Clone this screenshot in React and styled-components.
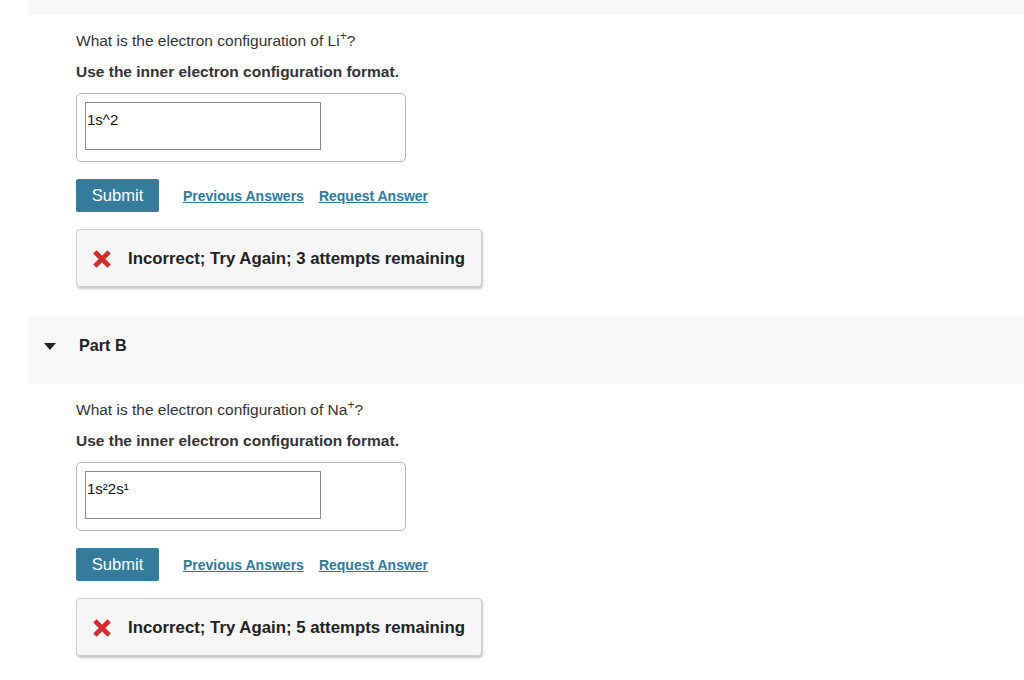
import React from "react";
import styled, { createGlobalStyle } from "styled-components";

const Global = createGlobalStyle`
  html, body { margin: 0; padding: 0; background: #fff; }
  body { font-family: "Liberation Sans", Arial, Helvetica, sans-serif; color: #333; }
`;

const Page = styled.div`
  padding-left: 28px;
`;

const Band = styled.div`
  background: #f7f7f7;
  height: ${(p) => p.$h}px;
  box-sizing: border-box;
  display: flex;
  align-items: center;
  padding-left: 16px;
  padding-bottom: ${(p) => (p.$h > 20 ? 10 : 0)}px;
`;

const Caret = styled.span`
  width: 0;
  height: 0;
  border-left: 6px solid transparent;
  border-right: 6px solid transparent;
  border-top: 7px solid #222;
  margin-right: 23px;
  margin-top: 1px;
`;

const PartTitle = styled.span`
  font-weight: bold;
  font-size: 16.2px;
  color: #222;
`;

const Section = styled.div`
  padding: 16px 0 30px 48px;
  display: flex;
  flex-direction: column;
  align-items: flex-start;
`;

const Question = styled.div`
  font-size: 15.5px;
  line-height: 20px;
  color: #333;
  sup { font-size: 12px; line-height: 0; vertical-align: 6px; }
`;

const Instruction = styled.div`
  font-size: 15.5px;
  line-height: 20px;
  font-weight: bold;
  color: #333;
  margin-top: 11px;
`;

const AnswerBox = styled.div`
  margin-top: 11px;
  width: 312px;
  padding: 8px 8px 11px 8px;
  border: 1px solid #b5b5b5;
  border-radius: 5px;
`;

const Input = styled.div`
  box-sizing: border-box;
  width: 236px;
  height: 48px;
  border: 1px solid #8a8a8a;
  font-size: 15px;
  line-height: 18px;
  color: #111;
  padding: 8px 0 0 1px;
`;

const Actions = styled.div`
  margin-top: 17px;
  display: flex;
  align-items: center;
`;

const SubmitButton = styled.button`
  width: 83px;
  height: 33px;
  background: #347b9c;
  color: #fff;
  border: none;
  border-radius: 2px;
  font-family: inherit;
  font-size: 16.6px;
  padding: 0;
  margin-right: 24px;
`;

const LinkText = styled.a`
  font-size: 14px;
  font-weight: bold;
  color: #2d7aa0;
  text-decoration: underline;
  margin-right: 15px;
  cursor: pointer;
`;

const Feedback = styled.div`
  margin-top: 17px;
  height: 58px;
  box-sizing: border-box;
  padding: 1px 16px 0 16px;
  display: flex;
  align-items: center;
  background: #f6f6f6;
  border: 1px solid #cfcfcf;
  border-radius: 4px;
  box-shadow: 1px 1.5px 2px rgba(0, 0, 0, 0.22);
`;

const FeedbackText = styled.span`
  font-size: 16.8px;
  font-weight: bold;
  color: #222;
  margin-left: 17px;
`;

const XIcon = () => (
  <svg width="18" height="18" viewBox="0 0 18 18">
    <path d="M3.5 3.5 L14.5 14.5 M14.5 3.5 L3.5 14.5" stroke="#d32b2b" strokeWidth="4.6" strokeLinecap="square" />
  </svg>
);

function Part({ ion, value, attempts }) {
  return (
    <Section>
      <Question>
        What is the electron configuration of {ion}<sup>+</sup>?
      </Question>
      <Instruction>Use the inner electron configuration format.</Instruction>
      <AnswerBox>
        <Input>{value}</Input>
      </AnswerBox>
      <Actions>
        <SubmitButton>Submit</SubmitButton>
        <LinkText>Previous Answers</LinkText>
        <LinkText>Request Answer</LinkText>
      </Actions>
      <Feedback>
        <XIcon />
        <FeedbackText>Incorrect; Try Again; {attempts} attempts remaining</FeedbackText>
      </Feedback>
    </Section>
  );
}

export default function App() {
  return (
    <Page>
      <Global />
      <Band $h={15} />
      <Part ion="Li" value="1s^2" attempts={3} />
      <Band $h={67}>
        <Caret />
        <PartTitle>Part B</PartTitle>
      </Band>
      <Part ion="Na" value="1s²2s¹" attempts={5} />
    </Page>
  );
}
